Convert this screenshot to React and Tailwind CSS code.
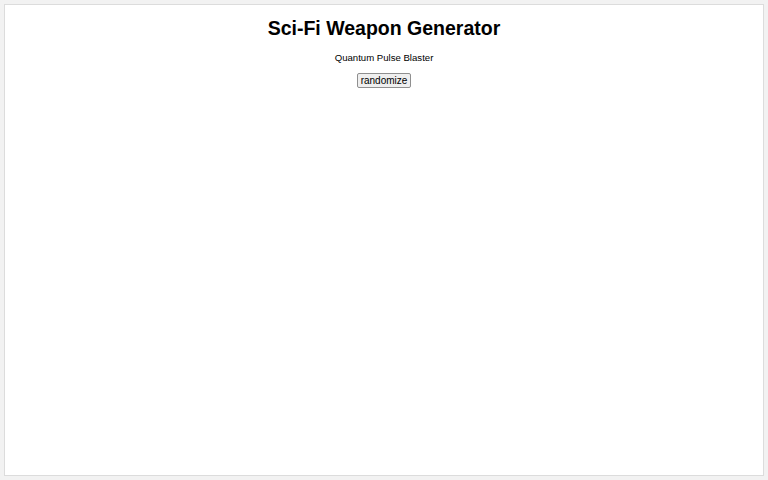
export default function App() {
  return (
    <div className="w-[768px] h-[480px] bg-[#f2f2f2] p-[4px] font-['Liberation_Sans',Arial,sans-serif]">
      <div className="h-full bg-white border border-[#dcdcdc] flex flex-col items-center">
        <h1 className="mt-[10px] text-[19.5px] font-bold text-black leading-[26px]">
          Sci-Fi Weapon Generator
        </h1>
        <p className="mt-[10px] text-[9.6px] text-black leading-[14px]">Quantum Pulse Blaster</p>
        <button className="mt-[8px] px-[3px] h-[15px] text-[10px] leading-[13px] text-black bg-[#efefef] border border-[#8f8f8f] rounded-[2px]">
          randomize
        </button>
      </div>
    </div>
  );
}
